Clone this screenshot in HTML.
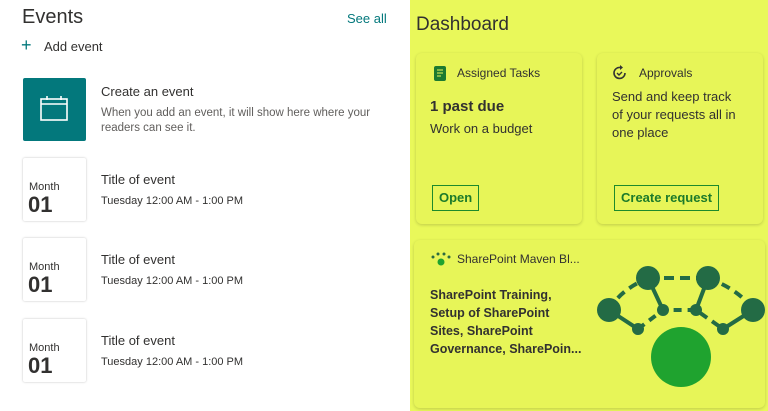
<!DOCTYPE html>
<html><head><style>
*{margin:0;padding:0;box-sizing:border-box}
body{width:768px;height:411px;overflow:hidden;font-family:"Liberation Sans",sans-serif;background:#fff;position:relative}
.a{position:absolute;white-space:nowrap}
.left{position:absolute;left:0;top:0;width:410px;height:411px;background:#fff}
.right{position:absolute;left:410px;top:0;width:358px;height:411px;background:#e9f85a}
.tile{position:absolute;left:23px;width:63px;height:63px;background:#fff;box-shadow:0 0 2px rgba(0,0,0,.25);border-radius:2px}
.card{position:absolute;background:#e7f558;border-radius:6px;box-shadow:0 1px 3px rgba(0,0,0,.18)}
.btn{position:absolute;border:1.5px solid #1c8a2c;color:#1c7a2a;font-weight:bold;font-size:13px;padding:0 6px;height:26px;line-height:23px}
</style></head><body>
<div class="left">
<div class="a" style="left:22px;top:6px;font-size:20px;color:#323130">Events</div>
<div class="a" style="left:347px;top:11px;font-size:13px;color:#03787c">See all</div>
<div class="a" style="left:21px;top:35px;font-size:18px;color:#03787c;font-weight:300">+</div>
<div class="a" style="left:44px;top:39px;font-size:13px;color:#323130">Add event</div>
<div class="a" style="left:23px;top:78px;width:63px;height:63px;background:#03787c;border-radius:2px"></div>
<svg class="a" style="left:40px;top:96px" width="28" height="26" viewBox="0 0 28 26"><rect x="1" y="3" width="26" height="21" fill="none" stroke="#fff" stroke-width="1.6"/><line x1="1" y1="8" x2="27" y2="8" stroke="#fff" stroke-width="1.6"/><line x1="7" y1="0" x2="7" y2="4" stroke="#fff" stroke-width="1.6"/><line x1="21" y1="0" x2="21" y2="4" stroke="#fff" stroke-width="1.6"/></svg>
<div class="a" style="left:101px;top:84px;font-size:13px;color:#323130">Create an event</div>
<div class="a" style="left:101px;top:106px;font-size:11.5px;color:#605e5c;line-height:15px">When you add an event, it will show here where your<br>readers can see it.</div>
<div class="tile" style="top:158px"></div><div class="tile" style="top:238px"></div><div class="tile" style="top:319px"></div>
<div class="a" style="left:29px;top:181px;font-size:11px;color:#323130">Month</div><div class="a" style="left:28px;top:192px;font-size:22px;font-weight:bold;color:#323130">01</div>
<div class="a" style="left:29px;top:261px;font-size:11px;color:#323130">Month</div><div class="a" style="left:28px;top:272px;font-size:22px;font-weight:bold;color:#323130">01</div>
<div class="a" style="left:29px;top:342px;font-size:11px;color:#323130">Month</div><div class="a" style="left:28px;top:353px;font-size:22px;font-weight:bold;color:#323130">01</div>
<div class="a" style="left:101px;top:172px;font-size:13px;color:#323130">Title of event</div><div class="a" style="left:101px;top:195px;font-size:11px;color:#323130">Tuesday 12:00 AM - 1:00 PM</div>
<div class="a" style="left:101px;top:252px;font-size:13px;color:#323130">Title of event</div><div class="a" style="left:101px;top:275px;font-size:11px;color:#323130">Tuesday 12:00 AM - 1:00 PM</div>
<div class="a" style="left:101px;top:333px;font-size:13px;color:#323130">Title of event</div><div class="a" style="left:101px;top:356px;font-size:11px;color:#323130">Tuesday 12:00 AM - 1:00 PM</div>
</div>
<div class="right">
<div class="a" style="left:6px;top:14px;font-size:19px;color:#323130">Dashboard</div>
<div class="card" style="left:6px;top:53px;width:166px;height:171px">
<svg class="a" style="left:18px;top:13px" width="14" height="16" viewBox="0 0 14 16"><rect x="0" y="0" width="12" height="15" rx="2" fill="#1c7a30"/><line x1="3" y1="4" x2="9" y2="4" stroke="#e7f558"/><line x1="3" y1="7" x2="9" y2="7" stroke="#e7f558"/><line x1="3" y1="10" x2="7" y2="10" stroke="#e7f558"/></svg>
<div class="a" style="left:41px;top:13px;font-size:12px;color:#323130">Assigned Tasks</div>
<div class="a" style="left:14px;top:45px;font-size:15px;font-weight:bold;color:#323130">1 past due</div>
<div class="a" style="left:14px;top:68px;font-size:13px;color:#323130">Work on a budget</div>
<div class="btn" style="left:16px;top:132px">Open</div>
</div>
<div class="card" style="left:187px;top:53px;width:166px;height:171px">
<svg class="a" style="left:15px;top:12px" width="16" height="16" viewBox="0 0 16 16"><path d="M13 8A5.5 5.5 0 1 1 8 2.5" fill="none" stroke="#333" stroke-width="1.6"/><path d="M8 0v5l3-2.5z" fill="#333"/><path d="M5 8l2 2 3-3" fill="none" stroke="#333" stroke-width="1.4"/></svg>
<div class="a" style="left:42px;top:13px;font-size:12px;color:#323130">Approvals</div>
<div class="a" style="left:15px;top:35px;font-size:13px;color:#323130;line-height:18px">Send and keep track<br>of your requests all in<br>one place</div>
<div class="btn" style="left:17px;top:132px">Create request</div>
</div>
<div class="card" style="left:4px;top:240px;width:351px;height:168px">
<svg class="a" style="left:16px;top:12px" width="22" height="14" viewBox="0 0 22 14"><circle cx="11" cy="10" r="3.5" fill="#1fa32f"/><circle cx="3" cy="5" r="1.5" fill="#2a6a40"/><circle cx="19" cy="5" r="1.5" fill="#2a6a40"/><circle cx="8" cy="2" r="1.5" fill="#2a6a40"/><circle cx="14" cy="2" r="1.5" fill="#2a6a40"/></svg>
<div class="a" style="left:43px;top:12px;font-size:12px;color:#323130">SharePoint Maven Bl...</div>
<div class="a" style="left:16px;top:46px;font-size:12.5px;font-weight:bold;color:#323130;line-height:18px">SharePoint Training,<br>Setup of SharePoint<br>Sites, SharePoint<br>Governance, SharePoin...</div>
</div>
<svg class="a" style="left:0;top:0" width="358" height="411" viewBox="410 0 358 411">
<g stroke="#236b45" stroke-width="4" fill="none">
<path d="M609 310 Q620 290 648 278" stroke-dasharray="9 6"/><path d="M648 278 L708 278" stroke-dasharray="10 6"/><path d="M708 278 Q740 290 753 310" stroke-dasharray="9 6"/>
<path d="M638 329 L663 310 L696 310 L723 329" stroke-dasharray="8 6"/>
<line x1="609" y1="310" x2="638" y2="329"/><line x1="648" y1="278" x2="663" y2="310"/><line x1="708" y1="278" x2="696" y2="310"/><line x1="753" y1="310" x2="723" y2="329"/>
</g>
<g fill="#236b45"><circle cx="648" cy="278" r="12"/><circle cx="708" cy="278" r="12"/><circle cx="609" cy="310" r="12"/><circle cx="753" cy="310" r="12"/>
<circle cx="663" cy="310" r="6"/><circle cx="696" cy="310" r="6"/><circle cx="638" cy="329" r="6"/><circle cx="723" cy="329" r="6"/></g>
<circle cx="681" cy="357" r="30" fill="#1fa32f"/>
</svg>
</div>
</body></html>
